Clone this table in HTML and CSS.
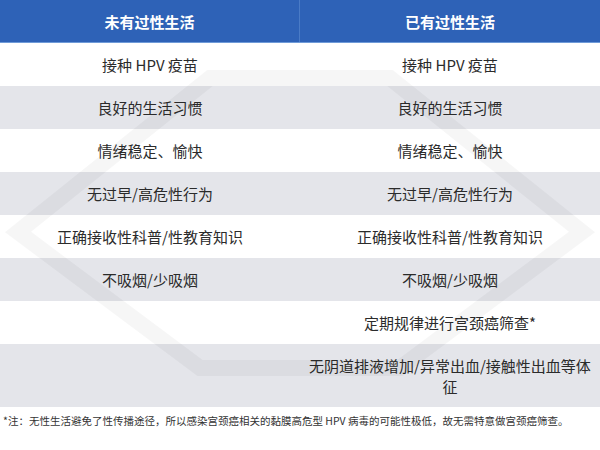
FILE: index.html
```html
<!DOCTYPE html>
<html lang="zh-CN">
<head>
<meta charset="utf-8">
<link rel="stylesheet" href="styles.css">
</head>
<body>
<div class="page">
  <div class="table">
    <div class="row head">
      <div class="cell">未有过性生活</div>
      <div class="cell">已有过性生活</div>
    </div>
    <div class="row">
      <div class="cell">接种 HPV 疫苗</div>
      <div class="cell">接种 HPV 疫苗</div>
    </div>
    <div class="row alt">
      <div class="cell">良好的生活习惯</div>
      <div class="cell">良好的生活习惯</div>
    </div>
    <div class="row">
      <div class="cell">情绪稳定、愉快</div>
      <div class="cell">情绪稳定、愉快</div>
    </div>
    <div class="row alt">
      <div class="cell">无过早/高危性行为</div>
      <div class="cell">无过早/高危性行为</div>
    </div>
    <div class="row">
      <div class="cell">正确接收性科普/性教育知识</div>
      <div class="cell">正确接收性科普/性教育知识</div>
    </div>
    <div class="row alt">
      <div class="cell">不吸烟/少吸烟</div>
      <div class="cell">不吸烟/少吸烟</div>
    </div>
    <div class="row">
      <div class="cell"></div>
      <div class="cell">定期规律进行宫颈癌筛查*</div>
    </div>
    <div class="row alt tall">
      <div class="cell"></div>
      <div class="cell">无阴道排液增加/异常出血/接触性出血等体征</div>
    </div>
    <svg class="mark" viewBox="0 0 600 407" width="600" height="407">
      <polygon points="210,78 390,78 582,232 400,368 200,368 18,232" fill="none" stroke="#000" stroke-opacity="0.035" stroke-width="16" stroke-linejoin="miter"/>
    </svg>
  </div>
  <p class="note">*注：无性生活避免了性传播途径，所以感染宫颈癌相关的黏膜高危型 HPV 病毒的可能性极低，故无需特意做宫颈癌筛查。</p>
</div>
</body>
</html>
```
FILE: styles.css
```css
html, body {
  margin: 0;
  padding: 0;
  background: #ffffff;
}
.page {
  width: 600px;
  height: 450px;
  font-family: "Noto Sans CJK SC", "Noto Sans", sans-serif;
  color: #2b2b2b;
}
.table {
  position: relative;
  display: flex;
  flex-direction: column;
}
.row {
  display: grid;
  grid-template-columns: 300px 300px;
  height: 43px;
  background: #ffffff;
}
.row.alt {
  background: #e4e5ea;
}
.row.tall {
  height: 63px;
}
.cell {
  display: flex;
  align-items: center;
  justify-content: center;
  text-align: center;
  font-size: 15px;
  line-height: 21px;
  padding: 0 8px;
}
.head {
  background: #2e62b7;
  border-bottom: 1px solid #6f9bd8;
  height: 42px;
}
.head .cell {
  color: #ffffff;
  font-weight: 700;
  font-size: 15px;
}
.head .cell:first-child {
  border-right: 1px solid #4a7bc6;
}
.mark {
  position: absolute;
  left: 0;
  top: 0;
  pointer-events: none;
}
.note {
  margin: 7px 0 0 3px;
  font-size: 10.5px;
  line-height: 14px;
  color: #333333;
  white-space: nowrap;
}
```
